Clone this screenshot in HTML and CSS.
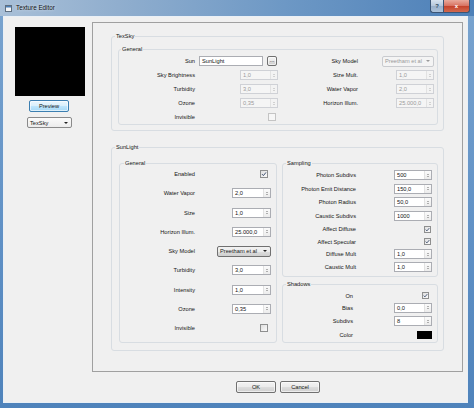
FILE: index.html
```html
<!DOCTYPE html>
<html>
<head>
<meta charset="utf-8">
<title>Texture Editor</title>
<link rel="stylesheet" href="styles.css">
</head>
<body>
<div class="window">
  <div class="titlebar">
    <svg class="app-icon" viewBox="0 0 7 7" width="7" height="7"><rect x="0.5" y="0.5" width="6" height="6" fill="#f4f6f8" stroke="#5f6f80" stroke-width="1"/><rect x="1" y="1" width="5" height="1.5" fill="#4d7fb5"/></svg>
    <span class="title">Texture Editor</span>
    <div class="caption">
      <div class="cap-btn cap-help">?</div>
      <div class="cap-btn cap-close">x</div>
    </div>
  </div>
  <div class="client">
    <div class="main">
      <div class="side">
        <div class="preview"></div>
        <div class="btn btn-preview">Preview</div>
        <div class="combo combo-tex"><span>TexSky</span><i class="arrow"></i></div>
      </div>
      <div class="panel">
        <fieldset class="group">
          <legend class="lg-3">TexSky</legend>
          <div class="wrap-texsky">
            <fieldset class="group">
              <legend class="lg-2">General</legend>
              <div class="form form-texsky">
                <div class="lbl">Sun</div>
                <div class="fld sunrow"><div class="text">SunLight</div><div class="btn dots">...</div></div>
                <div class="lbl">Sky Model</div>
                <div class="fld combo disabled combo-model"><span>Preetham et al</span><i class="arrow"></i></div>

                <div class="lbl">Sky Brightness</div>
                <div class="fld spin disabled"><span class="val">1,0</span><span class="spin-btn"><i class="up"></i><i class="down"></i></span></div>
                <div class="lbl">Size Mult.</div>
                <div class="fld spin disabled"><span class="val">1,0</span><span class="spin-btn"><i class="up"></i><i class="down"></i></span></div>

                <div class="lbl">Turbidity</div>
                <div class="fld spin disabled"><span class="val">3,0</span><span class="spin-btn"><i class="up"></i><i class="down"></i></span></div>
                <div class="lbl">Water Vapor</div>
                <div class="fld spin disabled"><span class="val">2,0</span><span class="spin-btn"><i class="up"></i><i class="down"></i></span></div>

                <div class="lbl">Ozone</div>
                <div class="fld spin disabled"><span class="val">0,35</span><span class="spin-btn"><i class="up"></i><i class="down"></i></span></div>
                <div class="lbl">Horizon Illum.</div>
                <div class="fld spin disabled"><span class="val">25.000,0</span><span class="spin-btn"><i class="up"></i><i class="down"></i></span></div>

                <div class="lbl">Invisible</div>
                <div class="fld chk chk-dis mr2"></div>
              </div>
            </fieldset>
          </div>
        </fieldset>

        <fieldset class="group group-sun">
          <legend class="lg-3">SunLight</legend>
          <div class="wrap-sun">
            <fieldset class="group group-gen">
              <legend class="lg-4">General</legend>
              <div class="form form-gen">
                <div class="lbl">Enabled</div>
                <div class="fld chk mr3"><svg viewBox="0 0 6 6" width="6" height="6"><path d="M1 3.1 L2.4 4.6 L5 1.4" fill="none" stroke="#3f5070" stroke-width="1"/></svg></div>
                <div class="lbl">Water Vapor</div>
                <div class="fld spin w39"><span class="val">2,0</span><span class="spin-btn"><i class="up"></i><i class="down"></i></span></div>
                <div class="lbl">Size</div>
                <div class="fld spin w39"><span class="val">1,0</span><span class="spin-btn"><i class="up"></i><i class="down"></i></span></div>
                <div class="lbl">Horizon Illum.</div>
                <div class="fld spin w39"><span class="val">25.000,0</span><span class="spin-btn"><i class="up"></i><i class="down"></i></span></div>
                <div class="lbl">Sky Model</div>
                <div class="fld combo combo-sky"><span>Preetham et al</span><i class="arrow"></i></div>
                <div class="lbl">Turbidity</div>
                <div class="fld spin w39"><span class="val">3,0</span><span class="spin-btn"><i class="up"></i><i class="down"></i></span></div>
                <div class="lbl">Intensity</div>
                <div class="fld spin w39"><span class="val">1,0</span><span class="spin-btn"><i class="up"></i><i class="down"></i></span></div>
                <div class="lbl">Ozone</div>
                <div class="fld spin w39"><span class="val">0,35</span><span class="spin-btn"><i class="up"></i><i class="down"></i></span></div>
                <div class="lbl">Invisible</div>
                <div class="fld chk mr3"></div>
              </div>
            </fieldset>
            <div class="rightcol">
              <fieldset class="group">
                <legend class="lg-3">Sampling</legend>
                <div class="form form-samp">
                  <div class="lbl">Photon Subdivs</div>
                  <div class="fld spin"><span class="val">500</span><span class="spin-btn"><i class="up"></i><i class="down"></i></span></div>
                  <div class="lbl">Photon Emit Distance</div>
                  <div class="fld spin"><span class="val">150,0</span><span class="spin-btn"><i class="up"></i><i class="down"></i></span></div>
                  <div class="lbl">Photon Radius</div>
                  <div class="fld spin"><span class="val">50,0</span><span class="spin-btn"><i class="up"></i><i class="down"></i></span></div>
                  <div class="lbl">Caustic Subdivs</div>
                  <div class="fld spin"><span class="val">1000</span><span class="spin-btn"><i class="up"></i><i class="down"></i></span></div>
                  <div class="lbl">Affect Diffuse</div>
                  <div class="fld chk chk-sm mr1"><svg viewBox="0 0 5 5" width="5" height="5"><path d="M0.7 2.6 L1.9 3.9 L4.3 1.1" fill="none" stroke="#3f5070" stroke-width="0.9"/></svg></div>
                  <div class="lbl">Affect Specular</div>
                  <div class="fld chk chk-sm mr1"><svg viewBox="0 0 5 5" width="5" height="5"><path d="M0.7 2.6 L1.9 3.9 L4.3 1.1" fill="none" stroke="#3f5070" stroke-width="0.9"/></svg></div>
                  <div class="lbl">Diffuse Mult</div>
                  <div class="fld spin"><span class="val">1,0</span><span class="spin-btn"><i class="up"></i><i class="down"></i></span></div>
                  <div class="lbl">Caustic Mult</div>
                  <div class="fld spin"><span class="val">1,0</span><span class="spin-btn"><i class="up"></i><i class="down"></i></span></div>
                </div>
              </fieldset>
              <fieldset class="group group-shadows">
                <legend class="lg-3">Shadows</legend>
                <div class="form form-shad">
                  <div class="lbl">On</div>
                  <div class="fld chk chk-sm mr3"><svg viewBox="0 0 5 5" width="5" height="5"><path d="M0.7 2.6 L1.9 3.9 L4.3 1.1" fill="none" stroke="#3f5070" stroke-width="0.9"/></svg></div>
                  <div class="lbl">Bias</div>
                  <div class="fld spin"><span class="val">0,0</span><span class="spin-btn"><i class="up"></i><i class="down"></i></span></div>
                  <div class="lbl">Subdivs</div>
                  <div class="fld spin"><span class="val">8</span><span class="spin-btn"><i class="up"></i><i class="down"></i></span></div>
                  <div class="lbl">Color</div>
                  <div class="fld swatch"></div>
                </div>
              </fieldset>
            </div>
          </div>
        </fieldset>
      </div>
    </div>
    <div class="footer">
      <div class="btn">OK</div>
      <div class="btn">Cancel</div>
    </div>
  </div>
</div>
</body>
</html>
```
FILE: styles.css
```css
* { box-sizing: border-box; }
html, body { margin: 0; padding: 0; }
body {
  width: 474px;
  height: 408px;
  overflow: hidden;
  font-family: "Liberation Sans", Arial, sans-serif;
  font-size: 5.7px;
  line-height: 8px;
  color: #151515;
  background: #5a8bc1;
}
.window {
  width: 474px;
  height: 408px;
  display: flex;
  flex-direction: column;
  background: linear-gradient(180deg, #7aa4cf 0%, #5f90c5 60%, #4f83bb 100%);
}
.titlebar {
  height: 16px;
  flex: none;
  display: flex;
  align-items: center;
  padding-left: 5px;
  background: linear-gradient(90deg, #a9c0d8 0%, #90aece 25%, #6d98c5 60%, #4d80b8 100%);
}
.app-icon { display: block; margin-right: 4px; }
.title {
  font-size: 6.3px;
  color: #111;
  text-shadow: 0 0 3px rgba(255, 255, 255, 0.8);
}
.caption {
  margin-left: auto;
  align-self: flex-start;
  display: flex;
  margin-right: 4px;
}
.cap-btn {
  height: 13px;
  display: flex;
  align-items: center;
  justify-content: center;
  font-weight: bold;
  font-size: 6px;
  color: #fff;
  border: 1px solid #3b5575;
  border-top: none;
}
.cap-help {
  width: 13px;
  border-right: none;
  border-radius: 0 0 0 3px;
  color: #2b3f57;
  background: linear-gradient(180deg, #d7e2ee 0%, #b3c6dc 50%, #98afca 51%, #aec3da 100%);
}
.cap-close {
  width: 27px;
  border-radius: 0 0 3px 0;
  background: linear-gradient(180deg, #e9a99c 0%, #d7705f 50%, #c5412a 51%, #d26a4f 100%);
}
.client {
  margin-left: 3px;
  width: 465px;
  height: 387px;
  border: 1px solid #eaf0f6;
  background: #f0f0f0;
  display: flex;
  flex-direction: column;
}
.main { display: flex; padding-top: 5px; }
.side {
  width: 88px;
  flex: none;
  padding: 5px 0 0 11px;
  display: flex;
  flex-direction: column;
  align-items: flex-start;
}
.preview { width: 70px; height: 69px; background: #000; }
.btn {
  height: 12px;
  width: 40px;
  border: 1px solid #707070;
  border-radius: 2px;
  background: linear-gradient(180deg, #f2f2f2 0%, #ebebeb 50%, #dddddd 51%, #cfcfcf 100%);
  box-shadow: inset 0 0 0 1px rgba(255, 255, 255, 0.6);
  display: flex;
  align-items: center;
  justify-content: center;
  color: #151515;
}
.btn-preview {
  margin: 4px 0 0 14px;
  border-color: #3c7fb1;
  background: linear-gradient(180deg, #eaf6fd 0%, #d9f0fc 50%, #bee6fd 51%, #a7d9f5 100%);
}
.combo {
  display: flex;
  align-items: center;
  justify-content: space-between;
  height: 11px;
  border: 1px solid #8a8a8a;
  border-radius: 2px;
  background: linear-gradient(180deg, #f6f6f6, #e4e4e4);
  padding: 0 3px 0 2px;
  white-space: nowrap;
}
.combo-tex { width: 45px; margin: 5px 0 0 12px; background: linear-gradient(180deg, #fbfbfb, #ececec); }
.arrow {
  display: block;
  width: 0;
  height: 0;
  border-left: 2px solid transparent;
  border-right: 2px solid transparent;
  border-top: 2px solid #222;
}
.panel {
  width: 371px;
  height: 350px;
  flex: none;
  border: 1px solid #a0a0a0;
  padding: 9px 18px 0 18px;
}
.group {
  margin: 0;
  padding: 0;
  min-width: 0;
  border: 1px solid #d8dde2;
  border-radius: 3px;
}
.group > legend {
  padding: 0 1px;
  height: 8px;
  line-height: 8px;
}
.lg-2 { margin-left: 2px; }
.lg-3 { margin-left: 3px; }
.lg-4 { margin-left: 4px; }
.wrap-texsky { padding: 5px 5px 5px 6px; }
.form { display: grid; align-items: center; }
.form-texsky {
  grid-template-columns: 76px 83px 80px 76px;
  grid-auto-rows: 14px;
  padding: 1px 3px 0 0;
}
.lbl { text-align: right; white-space: nowrap; }
.fld { justify-self: end; }
.sunrow { display: flex; gap: 4px; margin-right: 1px; }
.text {
  width: 64px;
  height: 10px;
  border: 1px solid #abadb3;
  background: #fff;
  padding-left: 2px;
}
.btn.dots { width: 10px; height: 10px; line-height: 6px; align-items: flex-start; }
.combo.disabled {
  border-color: #c9cbcf;
  background: #f4f4f4;
  color: #9a9a9a;
}
.combo.disabled .arrow { border-top-color: #9a9a9a; }
.combo-model { width: 52px; }
.spin {
  display: flex;
  height: 10px;
  width: 38px;
  border: 1px solid #abadb3;
  background: #fff;
}
.spin.w39 { width: 39px; }
.val { flex: 1; padding-left: 2px; white-space: nowrap; overflow: hidden; }
.spin-btn {
  width: 7px;
  display: flex;
  flex-direction: column;
  align-items: center;
  justify-content: center;
  gap: 1px;
  border-left: 1px solid #e2e2e2;
  background: linear-gradient(180deg, #fbfbfb, #ececec);
}
.up, .down {
  display: block;
  width: 0;
  height: 0;
  border-left: 1.5px solid transparent;
  border-right: 1.5px solid transparent;
}
.up { border-bottom: 1.5px solid #6a6a6a; }
.down { border-top: 1.5px solid #6a6a6a; }
.spin.disabled { border-color: #cfd1d6; background: #f5f5f5; color: #9a9a9a; }
.spin.disabled .spin-btn { background: #f3f3f3; }
.spin.disabled .up { border-bottom-color: #b0b0b0; }
.spin.disabled .down { border-top-color: #b0b0b0; }
.chk {
  width: 8px;
  height: 8px;
  border: 1px solid #8e8f8f;
  background: linear-gradient(135deg, #dedede, #fbfbfb);
  display: flex;
  align-items: center;
  justify-content: center;
}
.chk svg { display: block; }
.chk-sm { width: 7px; height: 7px; }
.chk-dis { border-color: #c4c4c4; background: #f6f6f6; }
.mr1 { margin-right: 1px; }
.mr2 { margin-right: 2px; }
.mr3 { margin-right: 3px; }
.group-sun { margin-top: 12px; }
.wrap-sun { display: flex; gap: 5px; padding: 8px 5px 7px 7px; }
.group-gen { width: 158px; flex: none; }
.form-gen {
  grid-template-columns: 75px 76px;
  grid-auto-rows: 11px;
  row-gap: 8.25px;
  padding: 1.5px 5px 8.5px 0;
}
.combo-sky {
  width: 54px;
  border-color: #707070;
  background: linear-gradient(180deg, #f2f2f2 0%, #ebebeb 50%, #dddddd 51%, #cfcfcf 100%);
}
.rightcol { width: 156px; flex: none; display: flex; flex-direction: column; }
.form-samp {
  grid-template-columns: 73px 76px;
  grid-template-rows: 14px 13.5px 13.5px 14px 12.5px 12px 13px 13px;
  padding: 1px 5px 2.5px 0;
}
.group-shadows { margin-top: 3px; }
.form-shad {
  grid-template-columns: 70px 79px;
  grid-template-rows: 11.5px 12.5px 14px 13px;
  padding: 2px 5px 1px 0;
}
.swatch { width: 15px; height: 8px; background: #000; }
.footer { display: flex; gap: 4px; padding-left: 232px; margin-top: 9px; }
```
